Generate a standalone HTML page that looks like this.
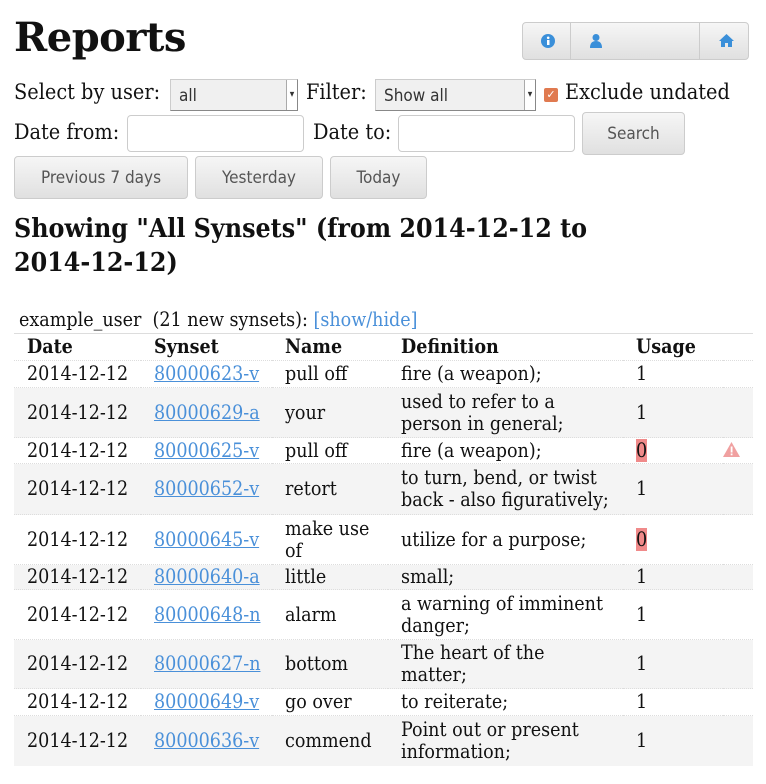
<!DOCTYPE html>
<html><head><meta charset="utf-8"><style>
body{margin:0;width:766px;height:784px;overflow:hidden;background:#fff;font-family:"DejaVu Serif Condensed","DejaVu Serif","Liberation Serif",serif;color:#111;font-size:19.5px}
h1{position:absolute;left:14px;top:14px;margin:0;font-size:40px;font-weight:bold;font-family:"DejaVu Serif","Liberation Serif",serif;letter-spacing:-0.5px}
.abs{position:absolute}
.lab{position:absolute;font-size:21.5px;white-space:nowrap;top:0}
.btn{position:absolute;background:linear-gradient(#f6f6f6,#e0e0e0);border:1px solid #ccc;border-radius:4px;font-family:"DejaVu Sans Condensed","DejaVu Sans","Liberation Sans",sans-serif;font-size:17px;color:#555;text-align:center;box-sizing:border-box}
.sel{position:absolute;background:#f0f0f0;border:1px solid #ccc;border-right-color:#888;border-bottom-color:#888;box-sizing:border-box;height:32px;font-family:"DejaVu Sans Condensed","Liberation Sans",sans-serif;font-size:17px;padding:6px 8px;color:#333}
.sel:after{content:"▾";position:absolute;right:0;top:0;width:10px;height:30px;background:#fff;font-size:10px;line-height:30px;text-align:center;border-left:1px solid #aaa}
.inp{position:absolute;border:1px solid #ccc;border-radius:4px;height:37px;box-sizing:border-box;background:#fff}
table{position:absolute;left:14px;top:334px;width:739px;border-collapse:collapse;table-layout:fixed}
td,th{text-align:left;padding:0 0 0 13px;line-height:22px;vertical-align:middle;overflow:visible;white-space:nowrap}
th{height:26px;font-weight:bold}
tr.g td{background:#f4f4f4}
td{border-top:1px dotted #ddd}
a{color:#4a90d9;text-decoration:underline}
.z{background:#f08a8a}
</style></head><body>
<h1>Reports</h1>
<div class="btn" style="left:522px;top:22px;width:227px;height:38px;padding:0">
<div class="abs" style="left:47px;top:0;width:1px;height:36px;background:#ccc"></div>
<div class="abs" style="left:176px;top:0;width:1px;height:36px;background:#ccc"></div>
<svg class="abs" style="left:18px;top:11px" width="14" height="14"><circle cx="7" cy="7" r="7" fill="#3a8fd9"/><rect x="6" y="6" width="2.5" height="5" fill="#fff"/><circle cx="7.2" cy="3.8" r="1.3" fill="#fff"/></svg>
<svg class="abs" style="left:66px;top:10px" width="14" height="16"><circle cx="7" cy="4.5" r="3.5" fill="#3a8fd9"/><path d="M1 15 Q1 8 7 8 Q13 8 13 15Z" fill="#3a8fd9"/></svg>
<svg class="abs" style="left:196px;top:11px" width="15" height="13"><path d="M7.5 0L15 7H13V13H9V9H6V13H2V7H0Z" fill="#3a8fd9"/></svg>
</div>
<div class="lab" style="left:14px;top:80px">Select by user:</div>
<div class="sel" style="left:170px;top:79px;width:128px">all</div>
<div class="lab" style="left:306px;top:80px">Filter:</div>
<div class="sel" style="left:375px;top:79px;width:161px">Show all</div>
<div class="abs" style="left:544px;top:88px;width:14px;height:14px;background:#e07a50;border-radius:2px;color:#fff;font-size:11px;line-height:14px;text-align:center">✓</div>
<div class="lab" style="left:565px;top:80px">Exclude undated</div>
<div class="lab" style="left:14px;top:120px">Date from:</div>
<div class="inp" style="left:127px;top:115px;width:177px"></div>
<div class="lab" style="left:313px;top:120px">Date to:</div>
<div class="inp" style="left:398px;top:115px;width:177px"></div>
<div class="btn" style="left:582px;top:112px;width:103px;height:43px;line-height:42px">Search</div>
<div class="btn" style="left:14px;top:156px;width:174px;height:43px;line-height:42px">Previous 7 days</div>
<div class="btn" style="left:195px;top:156px;width:128px;height:43px;line-height:42px">Yesterday</div>
<div class="btn" style="left:330px;top:156px;width:97px;height:43px;line-height:42px">Today</div>
<div class="abs" style="left:14px;top:212px;font-size:26.5px;font-weight:bold;line-height:34px;font-family:'DejaVu Serif Condensed','DejaVu Serif',serif;width:650px;white-space:nowrap">Showing "All Synsets" (from 2014-12-12 to<br>2014-12-12)</div>
<div class="abs" style="left:19px;top:308px;font-size:19.5px;white-space:nowrap">example_user&nbsp; (21 new synsets): <span style="color:#4a90d9">[show/hide]</span></div>
<div class="abs" style="left:14px;top:333px;width:739px;height:1px;background:#ddd"></div>
<table>
<colgroup><col style="width:127px"><col style="width:131px"><col style="width:116px"><col style="width:235px"><col><col style="width:30px"></colgroup>
<tr><th>Date</th><th>Synset</th><th>Name</th><th>Definition</th><th>Usage</th><th></th></tr>
<tr style="height:27px"><td>2014-12-12</td><td><a>80000623-v</a></td><td>pull off</td><td>fire (a weapon);</td><td>1</td><td></td></tr>
<tr class="g" style="height:50px"><td>2014-12-12</td><td><a>80000629-a</a></td><td>your</td><td>used to refer to a<br>person in general;</td><td>1</td><td></td></tr>
<tr style="height:26px"><td>2014-12-12</td><td><a>80000625-v</a></td><td>pull off</td><td>fire (a weapon);</td><td><span class="z">0</span></td><td style="padding:0"><svg width="17" height="15"><path d="M8.5 0L17 15H0Z" fill="#f0a0a0"/><rect x="7.7" y="4.5" width="1.8" height="6" fill="#fff"/><rect x="7.7" y="11.5" width="1.8" height="1.8" fill="#fff"/></svg></td></tr>
<tr class="g" style="height:51px"><td>2014-12-12</td><td><a>80000652-v</a></td><td>retort</td><td>to turn, bend, or twist<br>back - also figuratively;</td><td>1</td><td></td></tr>
<tr style="height:50px"><td>2014-12-12</td><td><a>80000645-v</a></td><td>make use<br>of</td><td>utilize for a purpose;</td><td><span class="z">0</span></td><td></td></tr>
<tr class="g" style="height:25px"><td>2014-12-12</td><td><a>80000640-a</a></td><td>little</td><td>small;</td><td>1</td><td></td></tr>
<tr style="height:50px"><td>2014-12-12</td><td><a>80000648-n</a></td><td>alarm</td><td>a warning of imminent<br>danger;</td><td>1</td><td></td></tr>
<tr class="g" style="height:49px"><td>2014-12-12</td><td><a>80000627-n</a></td><td>bottom</td><td>The heart of the<br>matter;</td><td>1</td><td></td></tr>
<tr style="height:27px"><td>2014-12-12</td><td><a>80000649-v</a></td><td>go over</td><td>to reiterate;</td><td>1</td><td></td></tr>
<tr class="g" style="height:50px"><td>2014-12-12</td><td><a>80000636-v</a></td><td>commend</td><td>Point out or present<br>information;</td><td>1</td><td></td></tr>
</table>
</body></html>
